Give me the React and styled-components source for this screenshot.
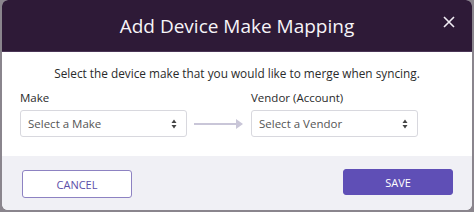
import styled, { createGlobalStyle } from "styled-components";

const GlobalStyle = createGlobalStyle`
	html, body {
		margin: 0;
		padding: 0;
		background: #8a858d;
		font-family: "Open Sans", "Liberation Sans", sans-serif;
	}
	#root {
		height: 212px;
		padding: 0 2px 2px;
		box-sizing: border-box;
	}
`;

const Arrow = () => (
	<svg width="52" height="12" viewBox="0 0 52 12">
		<line x1="1" y1="6" x2="44" y2="6" stroke="#c9c6d8" strokeWidth="2" />
		<path d="M43 1 L50 6 L43 11 Z" fill="#c9c6d8" />
	</svg>
);

const Caret = () => (
	<svg width="6" height="10" viewBox="0 0 6 10">
		<path d="M3 0.5 L5.5 4 L0.5 4 Z" fill="#444" />
		<path d="M3 9.5 L5.5 6 L0.5 6 Z" fill="#444" />
	</svg>
);

const App = () => {
	return (
		<>
			<GlobalStyle />
			<Modal>
				<Header>
					<Title>Add Device Make Mapping</Title>
					<Close aria-label="Close">
						<svg width="12" height="12" viewBox="0 0 12 12">
							<path d="M1 1 L11 11 M11 1 L1 11" stroke="#f1ecf4" strokeWidth="1.6" />
						</svg>
					</Close>
				</Header>
				<Body>
					<Intro>Select the device make that you would like to merge when syncing.</Intro>
					<Fields>
						<Field>
							<Label>Make</Label>
							<Select>
								<span>Select a Make</span>
								<Caret />
							</Select>
						</Field>
						<ArrowWrap>
							<Arrow />
						</ArrowWrap>
						<Field>
							<Label>Vendor (Account)</Label>
							<Select>
								<span>Select a Vendor</span>
								<Caret />
							</Select>
						</Field>
					</Fields>
				</Body>
				<Footer>
					<Button>CANCEL</Button>
					<Button primary>SAVE</Button>
				</Footer>
			</Modal>
		</>
	);
};

export default App;

const Modal = styled.div`
	display: flex;
	flex-direction: column;
	height: 210px;
	border-radius: 6px;
	overflow: hidden;
	background: #fff;
`;

const Header = styled.div`
	position: relative;
	display: flex;
	align-items: center;
	justify-content: center;
	height: 51px;
	background: #2e1a37;
	border-bottom: 1px solid #4a3656;
`;

const Title = styled.h1`
	margin: 0;
	font-size: 19px;
	font-weight: 400;
	color: #f7f4f8;
`;

const Close = styled.button`
	position: absolute;
	right: 15px;
	top: 14px;
	width: 16px;
	height: 16px;
	padding: 0;
	border: none;
	background: none;
	display: flex;
	align-items: center;
	justify-content: center;
`;

const Body = styled.div`
	height: 104px;
	padding: 13px 18px 0 18px;
	box-sizing: border-box;
	background: #fff;
`;

const Intro = styled.p`
	margin: 0 0 9px;
	text-align: center;
	font-size: 11.8px;
	color: #2b2b2b;
`;

const Fields = styled.div`
	display: flex;
	align-items: flex-end;
`;

const Field = styled.div`
	display: flex;
	flex-direction: column;
	width: 167px;
`;

const Label = styled.label`
	font-size: 11.5px;
	color: #2b2b2b;
	margin-bottom: 5px;
`;

const Select = styled.div`
	display: flex;
	align-items: center;
	justify-content: space-between;
	height: 25px;
	padding: 0 9px 0 7px;
	border: 1px solid #d8d8de;
	border-radius: 3px;
	font-size: 11.5px;
	color: #555;
	background: #fff;
`;

const ArrowWrap = styled.div`
	display: flex;
	align-items: center;
	justify-content: center;
	width: 64px;
	height: 27px;
`;

const Footer = styled.div`
	flex: 1;
	display: flex;
	align-items: center;
	justify-content: space-between;
	padding: 0 19px 0 20px;
	background: #f0f0f5;
`;

const Button = styled.button`
	width: 110px;
	height: ${(props) => (props.primary ? "26px" : "28px")};
	margin-top: ${(props) => (props.primary ? "-2px" : "2px")};
	border-radius: 3px;
	font-family: "Open Sans", "Liberation Sans", sans-serif;
	font-size: 11px;
	background: ${(props) => (props.primary ? "#5f4fb6" : "#fff")};
	color: ${(props) => (props.primary ? "#fff" : "#5b4da8")};
	border: 1px solid ${(props) => (props.primary ? "#5f4fb6" : "#8d82c2")};
`;
